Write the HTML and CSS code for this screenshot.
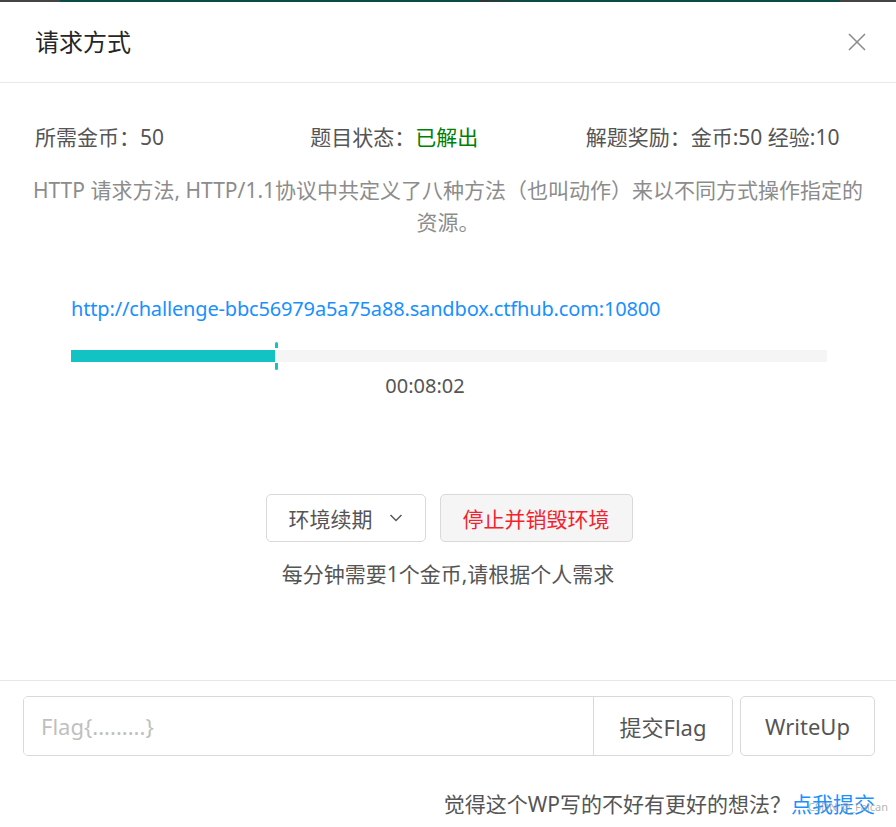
FILE: index.html
```html
<!DOCTYPE html>
<html lang="zh-CN">
<head>
    <meta charset="UTF-8">
    <title>请求方式</title>
    <link rel="stylesheet" href="styles.css">
</head>
<body>
    <div class="backdrop-strip"></div>

    <div class="modal">
        <!-- Header -->
        <div class="modal-header">
            <h2 class="modal-title">请求方式</h2>
            <span class="modal-close">
                <svg width="18" height="18" viewBox="0 0 18 18"><path d="M1 1 L17 17 M17 1 L1 17" stroke="#8c8c8c" stroke-width="1.6" fill="none"/></svg>
            </span>
        </div>

        <!-- Body -->
        <div class="modal-body">
            <div class="info-row">
                <div class="info-item">所需金币：50</div>
                <div class="info-item">题目状态：<span class="solved">已解出</span></div>
                <div class="info-item">解题奖励：金币:50 经验:10</div>
            </div>

            <p class="desc">HTTP 请求方法, HTTP/1.1协议中共定义了八种方法（也叫动作）来以不同方式操作指定的资源。</p>

            <div class="env">
                <a class="env-url" href="#">http://challenge-bbc56979a5a75a88.sandbox.ctfhub.com:10800</a>
                <div class="progress">
                    <div class="progress-fill" style="width: 27%"></div>
                    <span class="progress-mark" style="left: 27%"></span>
                </div>
                <div class="progress-time">00:08:02</div>
            </div>

            <div class="actions">
                <button class="btn btn-renew">环境续期 <svg width="14" height="10" viewBox="0 0 14 10"><path d="M1.5 2 L7 7.5 L12.5 2" stroke="#595959" stroke-width="1.5" fill="none"/></svg></button>
                <button class="btn btn-stop">停止并销毁环境</button>
            </div>
            <p class="cost">每分钟需要1个金币,请根据个人需求</p>
        </div>

        <!-- Footer -->
        <div class="modal-footer">
            <div class="flag-row">
                <div class="flag-group">
                    <input class="flag-input" type="text" placeholder="Flag{.........}">
                    <button class="flag-submit">提交Flag</button>
                </div>
                <button class="btn-writeup">WriteUp</button>
            </div>
            <p class="feedback">觉得这个WP写的不好有更好的想法？<a href="#">点我提交</a></p>
            <span class="watermark">CSDN @_Falcan</span>
        </div>
    </div>
</body>
</html>
```

FILE: styles.css
```css
* {
    margin: 0;
    padding: 0;
    box-sizing: border-box;
}

body {
    font-family: "Noto Sans", "Noto Sans CJK SC", sans-serif;
    background: #fff;
    color: #555;
    width: 896px;
    height: 827px;
    overflow: hidden;
}

/* dark page edge peeking over the modal */
.backdrop-strip {
    height: 2px;
    background: linear-gradient(90deg, #444 0, #444 60px, #0c4a45 60px, #0c4a45 480px, #333 480px, #0c4a45 520px, #0c4a45 840px, #444 840px);
}

.modal {
    position: relative;
    background: #fff;
}

/* Header */
.modal-header {
    height: 81px;
    display: flex;
    align-items: center;
    justify-content: space-between;
    padding: 0 30px 4px 35px;
    border-bottom: 1px solid #e8e8e8;
}

.modal-title {
    font-size: 24px;
    font-weight: normal;
    color: #262626;
}

.modal-close {
    display: flex;
    margin-top: 4px;
}

/* Body */
.modal-body {
    height: 597px;
    padding: 38px 35px 0;
}

.info-row {
    display: grid;
    grid-template-columns: repeat(3, 1fr);
    font-size: 21px;
    line-height: 32px;
    color: #555;
}

.solved {
    color: #008000;
}

.desc {
    margin: 21px -6px 0;
    font-size: 21px;
    line-height: 32px;
    color: #8c8c8c;
    text-align: center;
}

.env {
    padding: 55px 34px 0 36px;
}

.env-url {
    display: block;
    font-size: 20px;
    line-height: 32px;
    letter-spacing: -0.16px;
    color: #1890ff;
    text-decoration: none;
}

.progress {
    position: relative;
    height: 12px;
    margin-top: 25px;
    background: #f5f5f5;
}

.progress-fill {
    height: 100%;
    background: #13c2c2;
}

.progress-mark {
    position: absolute;
    top: -8px;
    bottom: -8px;
    width: 3px;
    background: linear-gradient(#13c2c2 0, #13c2c2 6px, transparent 6px, transparent 21px, #13c2c2 21px);
    border-radius: 2px;
}

.progress-time {
    margin-top: 8px;
    padding-right: 48px;
    text-align: center;
    font-size: 20px;
    line-height: 32px;
    color: #555;
}

.actions {
    display: flex;
    justify-content: center;
    gap: 14px;
    margin-top: 92px;
    padding-left: 2px;
}

.btn {
    height: 48px;
    padding: 0 22px;
    font-family: inherit;
    font-size: 21px;
    border: 1px solid #d9d9d9;
    border-radius: 5px;
    background: #fff;
    color: #555;
    display: flex;
    align-items: center;
    gap: 16px;
}

.btn-stop {
    background: #f5f5f5;
    color: #f5222d;
}

.cost {
    margin-top: 16px;
    text-align: center;
    font-size: 21px;
    line-height: 32px;
    color: #555;
}

/* Footer */
.modal-footer {
    position: relative;
    border-top: 1px solid #e8e8e8;
    padding: 15px 21px 0 23px;
}

.flag-row {
    display: flex;
    gap: 7px;
}

.flag-group {
    flex: 1;
    display: flex;
    height: 60px;
    border: 1px solid #d9d9d9;
    border-radius: 5px;
    overflow: hidden;
}

.flag-input {
    flex: 1;
    border: none;
    outline: none;
    padding: 0 17px;
    font-family: inherit;
    font-size: 22px;
    color: #555;
}

.flag-input::placeholder {
    color: #bfbfbf;
}

.flag-submit {
    width: 139px;
    border: none;
    border-left: 1px solid #d9d9d9;
    background: #fff;
    font-family: inherit;
    font-size: 22px;
    color: #555;
}

.btn-writeup {
    width: 135px;
    height: 60px;
    border: 1px solid #d9d9d9;
    border-radius: 5px;
    background: #fff;
    font-family: inherit;
    font-size: 22px;
    color: #555;
}

.feedback {
    margin-top: 32px;
    text-align: right;
    font-size: 21px;
    line-height: 32px;
    color: #555;
}

.feedback a {
    color: #1890ff;
    text-decoration: none;
}

.watermark {
    position: absolute;
    right: 8px;
    bottom: 6px;
    font-size: 11px;
    color: rgba(160, 160, 160, 0.8);
}
```
